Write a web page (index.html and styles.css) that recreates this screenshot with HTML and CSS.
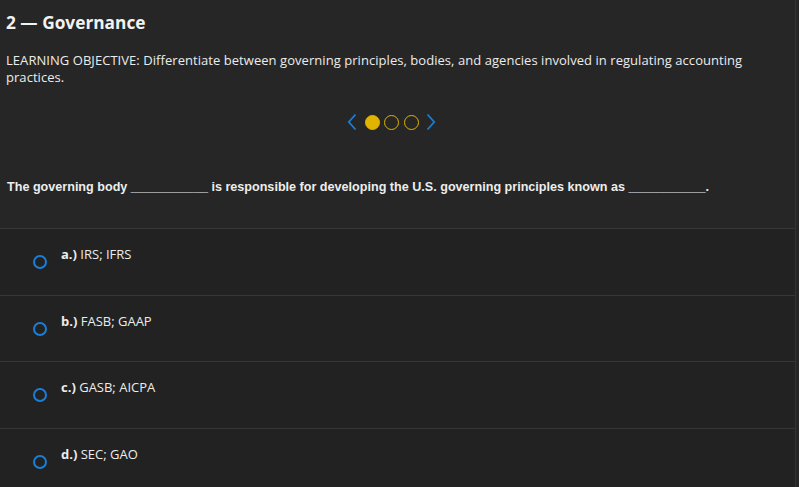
FILE: index.html
```html
<!doctype html>
<html lang="en">
<head>
    <meta charset="UTF-8">
    <meta name="viewport" content="width=device-width, initial-scale=1">
    <title>2 — Governance</title>
    <link rel="stylesheet" href="styles.css">
</head>
<body>
<div class="page">
    <div class="intro">
        <h1 class="title">2 — Governance</h1>
        <p class="objective">LEARNING OBJECTIVE: Differentiate between governing principles, bodies, and agencies involved in regulating accounting practices.</p>

        <div class="pager">
            <svg class="chevron prev" width="10" height="18" viewBox="0 0 10 18"><path d="M8.5 1.5 L1.8 9 L8.5 16.5" fill="none" stroke="#1b7ed6" stroke-width="1.8"/></svg>
            <span class="dot active"></span>
            <span class="dot"></span>
            <span class="dot"></span>
            <svg class="chevron next" width="10" height="18" viewBox="0 0 10 18"><path d="M1.5 1.5 L8.2 9 L1.5 16.5" fill="none" stroke="#1b7ed6" stroke-width="1.8"/></svg>
        </div>

        <p class="question">The governing body ___________ is responsible for developing the U.S. governing principles known as ___________.</p>
    </div>

    <ul class="options">
        <li class="option"><span class="radio"></span><span class="answer"><b>a.)</b> IRS; IFRS</span></li>
        <li class="option"><span class="radio"></span><span class="answer"><b>b.)</b> FASB; GAAP</span></li>
        <li class="option"><span class="radio"></span><span class="answer"><b>c.)</b> GASB; AICPA</span></li>
        <li class="option"><span class="radio"></span><span class="answer"><b>d.)</b> SEC; GAO</span></li>
    </ul>
</div>
</body>
</html>
```

FILE: styles.css
```css
body {
    margin: 0;
    padding: 0;
    background-color: #262626;
    color: #ececec;
    font-family: "Open Sans", Lato, sans-serif;
    height: 487px;
    overflow: hidden;
}

.page {
    width: 796px;
    height: 487px;
    overflow: hidden;
    border-right: 1px solid #333;
    box-sizing: border-box;
}

.intro {
    padding: 12px 6px 0 6px;
}

.title {
    margin: 0;
    font-size: 17.3px;
    font-weight: 700;
    line-height: 22px;
    color: #f2f2f2;
}

.objective {
    margin: 18px 0 0 0;
    font-size: 13px;
    letter-spacing: 0.05px;
    line-height: 17px;
}

.pager {
    display: flex;
    justify-content: center;
    align-items: center;
    gap: 4.5px;
    margin-top: 26px;
    padding-right: 12px;
    height: 20px;
}

.chevron {
    display: block;
}

.chevron.prev {
    margin-right: 3px;
}

.chevron.next {
    margin-left: 3px;
}

.dot {
    width: 15px;
    height: 15px;
    border: 1.5px solid #e0b400;
    border-radius: 50%;
    box-sizing: border-box;
}

.dot.active {
    background-color: #e0b400;
}

.question {
    margin: 47px 0 0 1px;
    font-family: "Liberation Sans", Arial, sans-serif;
    font-size: 12.6px;
    font-weight: 700;
    line-height: 16px;
    color: #ededed;
}

.options {
    list-style: none;
    margin: 33px 0 0 0;
    padding: 0;
}

.option {
    display: flex;
    align-items: flex-start;
    height: 66.5px;
    border-top: 1px solid #363636;
    background-color: #222;
    box-sizing: border-box;
    padding-top: 17px;
}

.radio {
    width: 10px;
    height: 10px;
    margin: 9px 0 0 33px;
    border: 2px solid #1b7ed6;
    border-radius: 50%;
    flex-shrink: 0;
}

.answer {
    margin-left: 14px;
    font-size: 13px;
    line-height: 16px;
}

.answer b {
    font-weight: 700;
}
```
